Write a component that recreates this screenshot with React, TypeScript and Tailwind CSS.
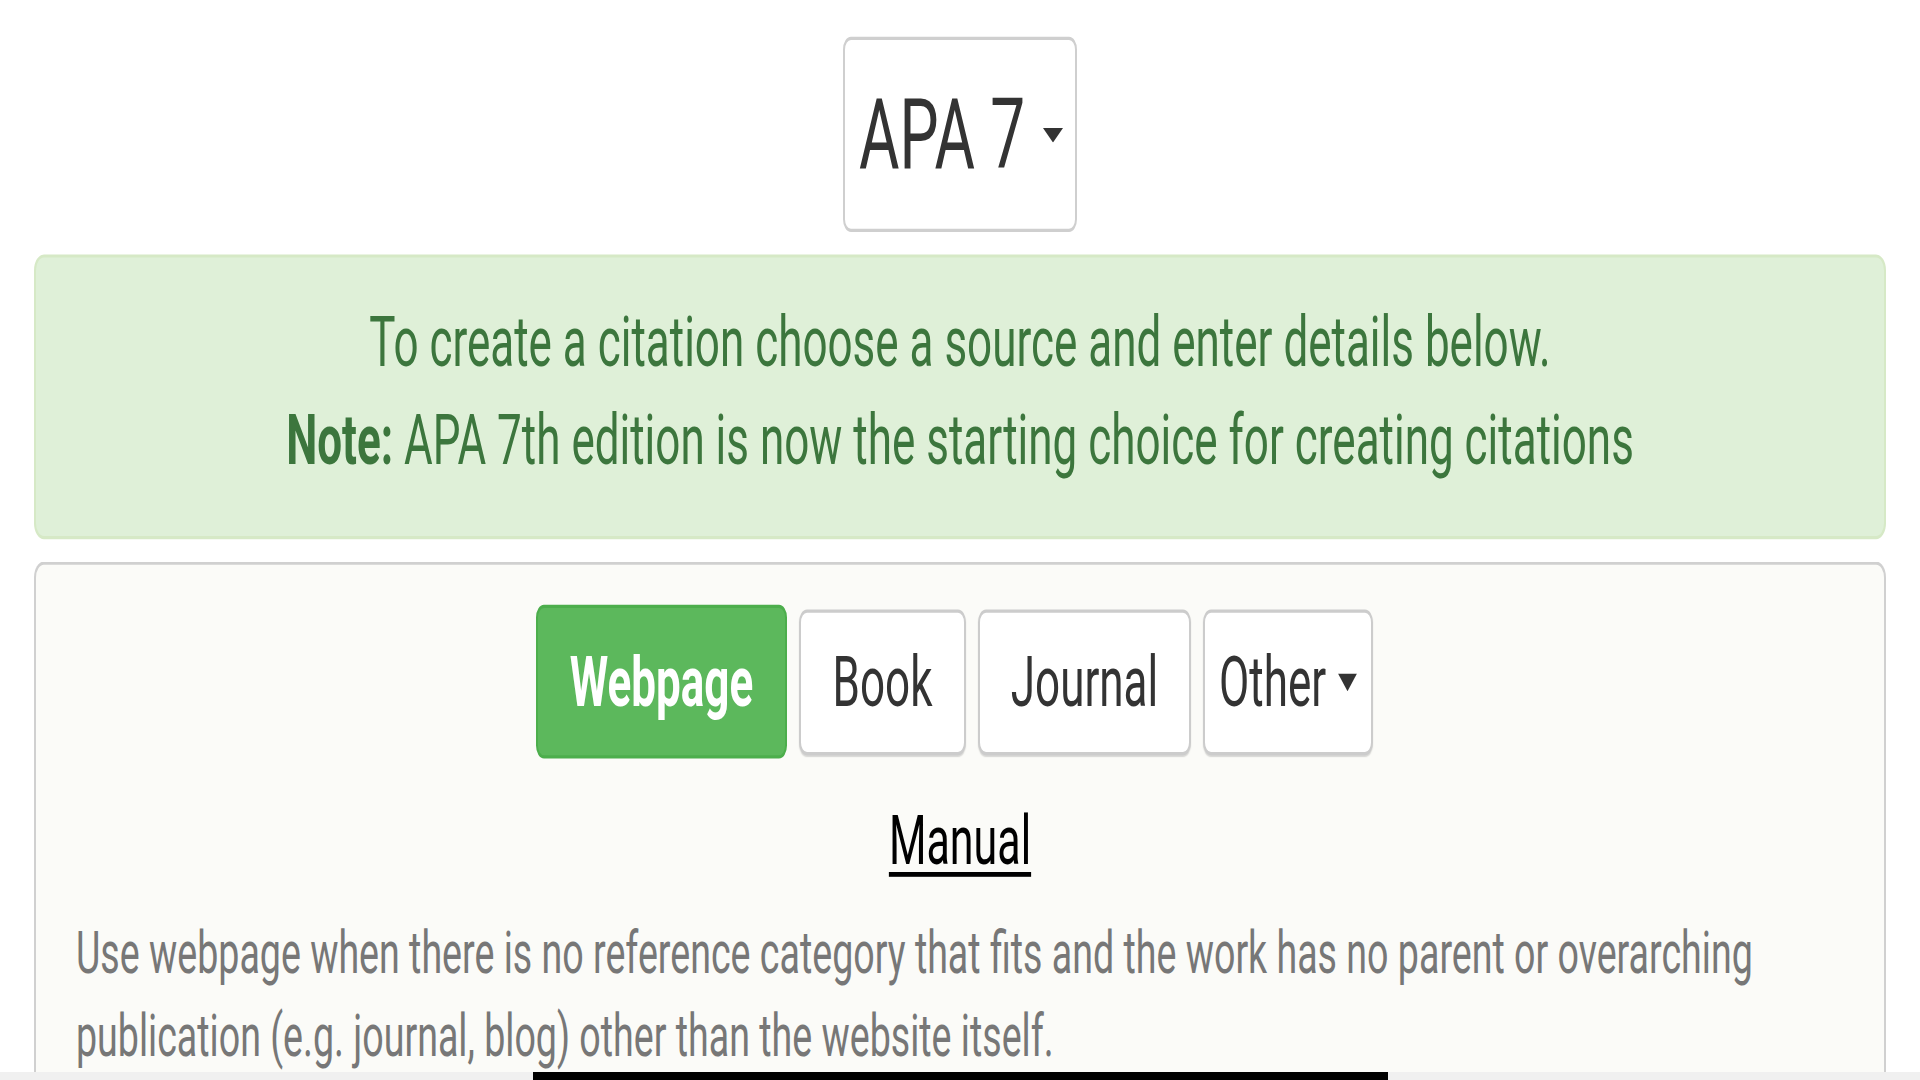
import React from "react";

function Caret({ w, h }: { w: number; h: number }) {
  return (
    <svg width={w} height={h} viewBox="0 0 20 10" preserveAspectRatio="none" className="shrink-0">
      <polygon points="0,0 20,0 10,10" fill="#333333" />
    </svg>
  );
}

export default function App() {
  return (
    <div className="w-[1920px] h-[1080px] overflow-hidden bg-white" style={{ fontFamily: "Roboto, 'Noto Sans', sans-serif" }}>
      <div className="w-[1920px] h-[675px] origin-top scale-y-[1.6] flex flex-col">
        <div className="flex-1 min-h-0 overflow-hidden flex flex-col items-center px-[34px] pt-[23px]">
          {/* style selector */}
          <div className="shrink-0 w-[234px] h-[122px] border-2 border-[#cfcfcf] rounded-[8px] bg-white flex items-center pl-[14px] gap-[18px]">
            <span className="text-[62px] leading-none text-[#333333]">APA 7</span>
            <Caret w={20} h={9} />
          </div>

          {/* alert */}
          <div className="shrink-0 mt-[14px] w-full h-[178px] rounded-[10px] border-2 border-[#d6e9c6] bg-[#dff0d8] text-[#3c763d] flex flex-col items-center pt-[23px]">
            <p className="text-[44px] leading-[61px]">To create a citation choose a source and enter details below.</p>
            <p className="text-[44px] leading-[61px]">
              <span className="font-bold">Note:</span> APA 7th edition is now the starting choice for creating citations
            </p>
          </div>

          {/* card */}
          <div className="shrink-0 mt-[14px] w-full h-[340px] rounded-t-[10px] border-2 border-b-0 border-[#d0d0d0] bg-[#fbfbf8] flex flex-col items-center pt-[25px] px-[40px]">
            <div className="shrink-0 flex items-center gap-[12px] h-[96px] mr-[11px]">
              <div className="h-[96px] w-[251px] rounded-[8px] bg-[#5cb85c] border-2 border-[#4cae4c] flex items-center justify-center text-white font-bold text-[44px]">
                Webpage
              </div>
              <div className="h-[91px] w-[167px] rounded-[8px] bg-white border-2 border-[#cccccc] shadow-[0_1px_1px_rgba(0,0,0,0.15)] flex items-center justify-center text-[#333333] text-[44px]">
                Book
              </div>
              <div className="h-[91px] w-[213px] rounded-[8px] bg-white border-2 border-[#cccccc] shadow-[0_1px_1px_rgba(0,0,0,0.15)] flex items-center justify-center text-[#333333] text-[44px]">
                Journal
              </div>
              <div className="h-[91px] w-[170px] rounded-[8px] bg-white border-2 border-[#cccccc] shadow-[0_1px_1px_rgba(0,0,0,0.15)] flex items-center pl-[14px] gap-[12px] text-[#333333] text-[44px]">
                <span>Other</span>
                <Caret w={19} h={11} />
              </div>
            </div>
            <div className="shrink-0 mt-[25px] text-[43px] leading-[53px] text-black underline underline-offset-[5px] decoration-[3px]">Manual</div>
            <p className="shrink-0 mt-[17px] self-stretch text-[37.6px] leading-[52px] text-[#777777]">
              Use webpage when there is no reference category that fits and the work has no parent or overarching publication (e.g. journal, blog) other than the website itself.
            </p>
          </div>
        </div>
        <div className="shrink-0 h-[5px] bg-[#f0f0f0] flex justify-center">
          <div className="w-[855px] h-full bg-black" />
        </div>
      </div>
    </div>
  );
}
